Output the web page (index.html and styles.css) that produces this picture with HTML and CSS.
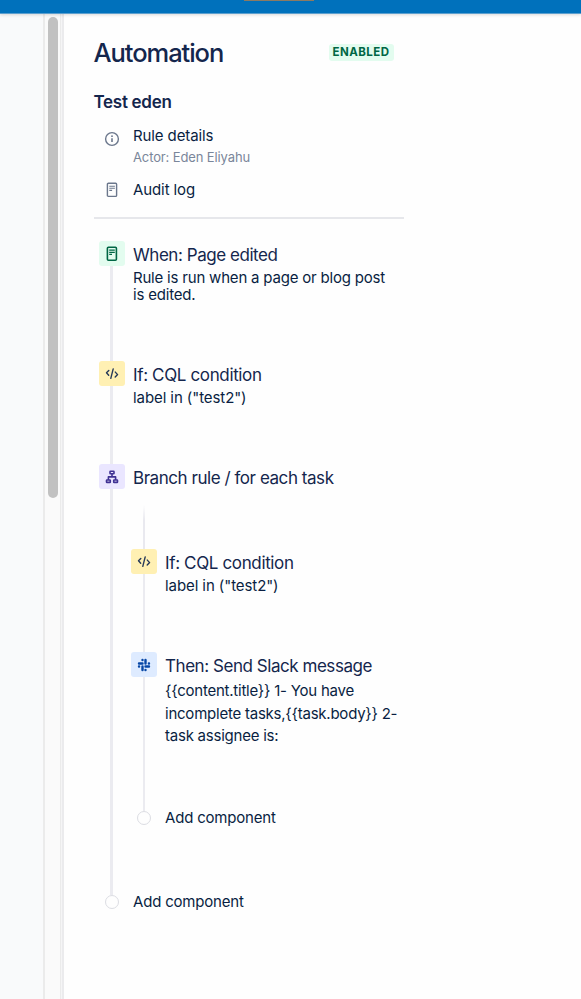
FILE: index.html
```html
<!DOCTYPE html>
<html lang="en">
<head>
  <meta charset="UTF-8" />
  <meta name="viewport" content="width=device-width, initial-scale=1.0" />
  <title>Automation</title>
  <link rel="stylesheet" href="styles.css">
</head>
<body>
  <header class="topbar"><div class="tab-line"></div></header>

  <div class="layout">
    <aside class="sidebar"></aside>
    <div class="scrollbar"><div class="thumb"></div></div>
    <div class="divider"></div>

    <main class="panel">
      <div class="heading">
        <h1>Automation</h1>
        <span class="badge">ENABLED</span>
      </div>
      <h2>Test eden</h2>

      <div class="info details">
        <svg class="info-icon" width="16" height="16" viewBox="0 0 16 16" fill="none" stroke="#6b778c" stroke-width="1.4">
          <circle cx="8" cy="8" r="6.4" />
          <path d="M8 7.3v3.8" stroke-width="1.6" />
          <circle cx="8" cy="5.2" r=".9" fill="#6b778c" stroke="none" />
        </svg>
        <div>
          <div class="link">Rule details</div>
          <div class="actor">Actor: Eden Eliyahu</div>
        </div>
      </div>
      <div class="info audit">
        <svg class="info-icon" width="16" height="16" viewBox="0 0 16 16" fill="none" stroke="#6b778c" stroke-width="1.4">
          <rect x="3.4" y="1.2" width="9.2" height="13.2" rx="1" />
          <path d="M5.3 4.2h5.6M5.3 6.3h5.6M5.3 8.4h2.8" stroke-width="1.1" />
        </svg>
        <div class="link">Audit log</div>
      </div>
      <hr>

      <div class="chain">
        <div class="step trigger">
          <div class="rail">
            <div class="icon green">
              <svg width="16" height="16" viewBox="0 0 16 16" fill="none" stroke="#006644" stroke-width="1.6">
                <rect x="3.4" y="1.3" width="9" height="13" rx="1" />
                <path d="M5.2 4.2h5.6M5.2 6.3h5.6M5.2 8.4h2.8" stroke-width="1.2" />
              </svg>
            </div>
            <div class="line"></div>
          </div>
          <div class="text">
            <div class="title">When: Page edited</div>
            <div class="desc">Rule is run when a page or blog post<br>is edited.</div>
          </div>
        </div>

        <div class="step condition">
          <div class="rail">
            <div class="icon yellow">
              <svg width="16" height="16" viewBox="0 0 16 16" fill="none" stroke="#253858" stroke-width="1.4" stroke-linecap="round" stroke-linejoin="round">
                <path d="M4.8 4.4L2.5 6.8l2.2 2.5M9.2 2.9L6.8 12.4M11.3 6.1l2.3 2.5-2.4 2.4" />
              </svg>
            </div>
            <div class="line"></div>
          </div>
          <div class="text">
            <div class="title short">If: CQL condition</div>
            <div class="desc query">label in ("test2")</div>
          </div>
        </div>

        <div class="step branch">
          <div class="rail">
            <div class="icon purple">
              <svg width="16" height="16" viewBox="0 0 16 16" fill="none" stroke="#403294" stroke-width="1.6" stroke-linejoin="round">
                <rect x="6" y="2.2" width="4" height="2.6" rx=".5" />
                <rect x="2.5" y="11" width="3.8" height="2.4" rx=".5" />
                <rect x="9.7" y="11" width="3.8" height="2.4" rx=".5" />
                <path d="M8 4.8v3.1M4.4 11V7.9h7.2V11" />
              </svg>
            </div>
            <div class="line"></div>
          </div>
          <div class="text">
            <div class="title">Branch rule / for each task</div>
            <div class="chain nested">
              <div class="fade"></div>
              <div class="step condition">
                <div class="rail">
                  <div class="icon yellow">
                    <svg width="16" height="16" viewBox="0 0 16 16" fill="none" stroke="#253858" stroke-width="1.4" stroke-linecap="round" stroke-linejoin="round">
                      <path d="M4.8 4.4L2.5 6.8l2.2 2.5M9.2 2.9L6.8 12.4M11.3 6.1l2.3 2.5-2.4 2.4" />
                    </svg>
                  </div>
                  <div class="line thin"></div>
                </div>
                <div class="text">
                  <div class="title short">If: CQL condition</div>
                  <div class="desc query">label in ("test2")</div>
                </div>
              </div>

              <div class="step action">
                <div class="rail">
                  <div class="icon blue">
                    <svg width="16" height="16" viewBox="0 0 16 16" fill="none" stroke="#0747a6" stroke-width="2.4" stroke-linecap="round">
                      <path d="M6.5 6.5H3M9.5 6.5V3M9.5 9.5H13M6.5 9.5V13" />
                      <path d="M6.5 3v.1M13 6.5h-.1M9.5 13v-.1M3 9.5h.1" />
                    </svg>
                  </div>
                  <div class="line thin"></div>
                </div>
                <div class="text">
                  <div class="title">Then: Send Slack message</div>
                  <div class="desc message">{{content.title}} 1- You have<br>incomplete tasks,{{task.body}} 2-<br>task assignee is:</div>
                </div>
              </div>

              <div class="add">
                <div class="dot"></div>
                <div class="link">Add component</div>
              </div>
            </div>
          </div>
        </div>

        <div class="add">
          <div class="dot"></div>
          <div class="link">Add component</div>
        </div>
      </div>
    </main>
  </div>
</body>
</html>
```

FILE: styles.css
```css
* {
  margin: 0;
  padding: 0;
  box-sizing: border-box;
}

body {
  height: 999px;
  overflow: hidden;
  display: flex;
  flex-direction: column;
  font-family: Inter, sans-serif;
  background: #fefefe;
  color: #14264d;
  white-space: nowrap;
}

.topbar {
  height: 14px;
  flex: none;
  background: #0071bc;
  border-bottom: 1px solid #5c9fce;
  box-shadow: 0 1px 3px rgba(0, 0, 0, 0.15);
  z-index: 1;
}

.tab-line {
  width: 70px;
  height: 1px;
  margin-left: 244px;
  background: #8c7a62;
}

.layout {
  flex: 1;
  display: flex;
}

.sidebar {
  width: 43px;
  background: #f9fafb;
}

.scrollbar {
  width: 18px;
  padding: 3px 0 0 3px;
  background: #fafafa;
  border-left: 2px solid #ebebeb;
  border-right: 1px solid #ebebeb;
}

.thumb {
  width: 10px;
  height: 481px;
  border-radius: 5px;
  background: #c1c1c1;
}

.divider {
  width: 3px;
  background: #ebebed;
  border-left: 1px solid #f5f5f6;
}

.panel {
  width: 340px;
  padding: 22px 0 0 29.5px;
}

.heading {
  width: 300px;
  height: 34px;
  display: flex;
  align-items: center;
  justify-content: space-between;
}

h1 {
  font-size: 25.5px;
  line-height: 34px;
  font-weight: 500;
  letter-spacing: -1.05px;
}

.badge {
  height: 17px;
  padding: 0 4px;
  margin-bottom: 2px;
  border-radius: 3px;
  background: #e3fcef;
  color: #006644;
  font-size: 11.5px;
  line-height: 17px;
  font-weight: 700;
  letter-spacing: 0.45px;
}

h2 {
  margin-top: 21px;
  font-size: 17px;
  line-height: 22px;
  font-weight: 600;
  letter-spacing: -0.3px;
}

.info {
  display: flex;
}

.info-icon {
  flex: none;
  margin: 4px 13.5px 0 10px;
}

.details {
  height: 54px;
  margin-top: 14px;
}

.link {
  font-size: 15px;
  line-height: 18px;
  letter-spacing: -0.2px;
  color: #091e42;
}

.info .link {
  letter-spacing: -0.1px;
}

.actor {
  margin-top: 3px;
  font-size: 13px;
  line-height: 18px;
  letter-spacing: -0.12px;
  color: #7a869a;
}

.audit {
  height: 36px;
}

.audit .info-icon {
  margin-top: 1px;
}

hr {
  width: 310px;
  border: none;
  border-top: 2px solid #e6e7eb;
}

.chain {
  margin: 22px 0 0 5px;
}

.step {
  display: flex;
}

.trigger {
  height: 120px;
}

.condition {
  height: 103px;
}

.branch {
  height: 431px;
}

.action {
  height: 159px;
}

.rail {
  width: 26px;
  flex: none;
  display: flex;
  flex-direction: column;
  align-items: center;
}

.icon {
  width: 26px;
  height: 25px;
  flex: none;
  display: flex;
  align-items: center;
  justify-content: center;
  border-radius: 3px;
}

.green {
  background: #e3fcef;
}

.yellow {
  background: #fff0b3;
}

.purple {
  background: #eae6ff;
}

.blue {
  background: #deebff;
}

.line {
  width: 3px;
  flex: 1;
  background: #ebebf0;
}

.thin {
  width: 2px;
}

.text {
  padding: 3px 0 0 8.5px;
}

.title {
  font-size: 17px;
  line-height: 22px;
  letter-spacing: -0.45px;
}

.short {
  letter-spacing: -0.36px;
}

.desc {
  margin-top: 3px;
  font-size: 15px;
  line-height: 17px;
  letter-spacing: -0.2px;
  color: #091e42;
}

.query {
  letter-spacing: -0.08px;
}

.message {
  line-height: 22.5px;
  letter-spacing: -0.23px;
}

.nested {
  margin: 16px 0 0 -2.5px;
}

.fade {
  width: 2px;
  height: 44px;
  margin-left: 12px;
  background: linear-gradient(#fefefe, #e9e9ef 35%);
}

.add {
  display: flex;
  align-items: center;
  height: 14px;
}

.dot {
  width: 14px;
  height: 14px;
  margin: 0 14.5px 0 6px;
  border: 1px solid #dcdde3;
  border-radius: 50%;
}
```
